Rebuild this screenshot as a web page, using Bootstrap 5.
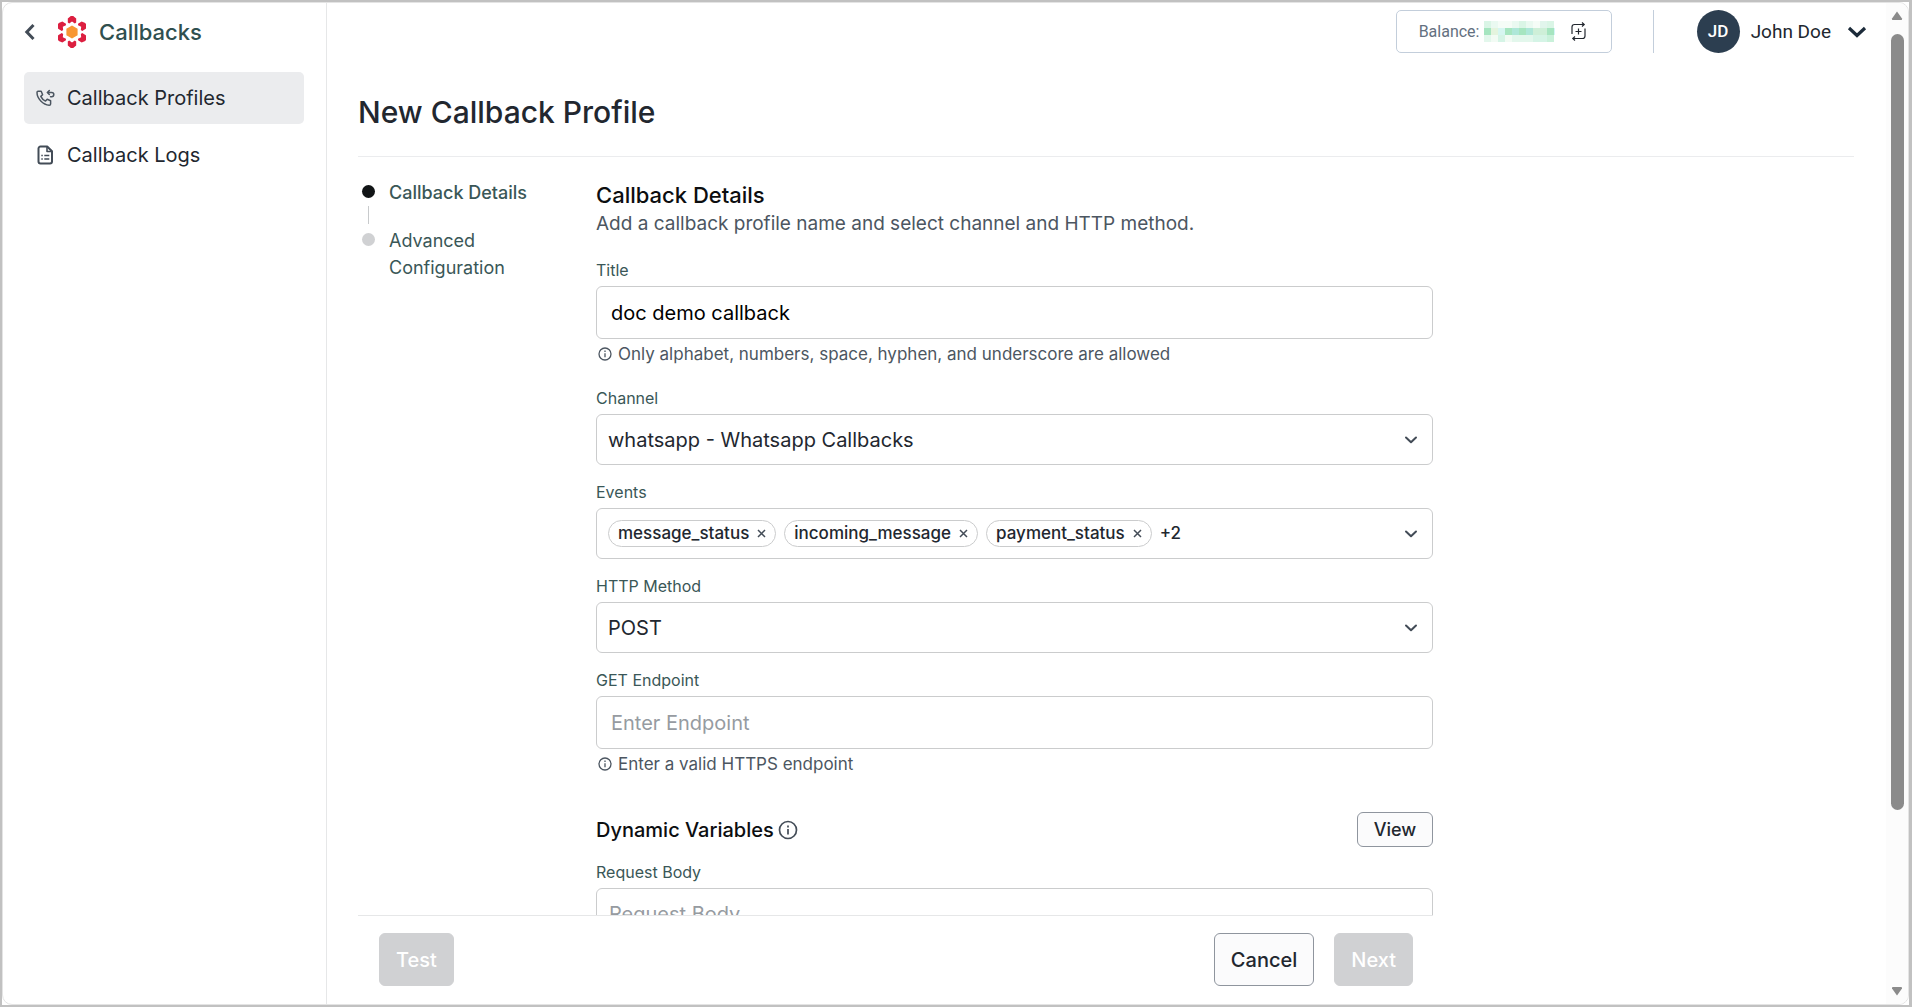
<!DOCTYPE html>
<html lang="en">
<head>
<meta charset="utf-8">
<meta name="viewport" content="width=device-width, initial-scale=1">
<title>New Callback Profile</title>
<link href="https://cdn.jsdelivr.net/npm/bootstrap@5.3.0/dist/css/bootstrap.min.css" rel="stylesheet">
<style>
  body { font-family: Inter, "Noto Sans", sans-serif; color: #22272f; background: #fff; }
  .app-frame { height: 100vh; border: 2px solid #c1c1c1; border-right-width: 3px; }
  .app-shell { height: 100%; border: 1px solid #e4e4e4; border-radius: 10px; background: #fff; }
  .side-panel { width: 324px; border-right: 1px solid #e6e7e8; padding: 0 22px 0 21px; }
  .brand-bar { height: 48px; gap: 22px; margin: 5px 0 16px; }
  .brand-mark { gap: 13px; }
  .brand-title { font-size: 22px; font-weight: 500; color: #2f4f4f; }
  .side-link { height: 52px; padding: 0 12px; gap: 12px; border-radius: 5px; font-size: 20px; color: #22272f; }
  .side-link.active { background: #ebecee; }
  .side-list { gap: 5px; }
  .top-bar { font-family: Roboto, sans-serif; height: 89px; padding: 7px 18px 0 0; }
  .balance-box { width: 216px; height: 43px; border: 1px solid #c3cedb; border-radius: 5px; padding: 0 22px; font-size: 16px; color: #637080; }
  .top-rule { width: 1px; height: 43px; background: #c3cedb; margin: 0 43px 0 41px; }
  .user-menu { gap: 11px; font-size: 19px; color: #1c2b3a; }
  .avatar { width: 43px; height: 43px; background: #2c3e50; font-size: 17px; }
  .page-area { padding: 0 32px 0 31px; }
  .page-heading { font-size: 30px; line-height: 40px; font-weight: 500; padding-bottom: 24px; border-bottom: 1px solid #ebecee; }
  .step-list { width: 238px; padding: 22px 50px 0 4px; font-size: 18px; line-height: 27px; color: #3a5757; }
  .step-item { gap: 14px; }
  .step-item:first-child { height: 48px; }
  .step-mark { width: 13px; padding-top: 6px; gap: 8px; }
  .step-dot { width: 13px; height: 13px; background: #d0d1d3; }
  .step-dot.current { background: #111416; }
  .step-line { width: 1px; height: 18px; background: #c8cacc; }
  .form-col { width: 837px; padding-top: 23px; }
  .section-title { font-size: 22px; line-height: 30px; font-weight: 500; color: #0c0e10; }
  .section-title.sub { font-size: 20px; }
  .section-note { font-size: 19px; line-height: 28px; color: #4c5661; margin-bottom: 20px; }
  .field-label { font-size: 16px; line-height: 24px; color: #3a5757; margin-bottom: 4px; display: block; }
  .field-gap { margin-bottom: 15px; }
  .form-control.field { height: 53px; font-size: 20px; padding: 0 14px; border-color: #cbcccd; border-radius: 6px; color: #000; }
  .form-control.field::placeholder { color: #969ba1; }
  .form-control.field.body-field { height: 120px; padding: 10px 12px; }
  .form-select.field { height: 51px; font-size: 20px; padding: 0 40px 0 11px; border-color: #cbcccd; border-radius: 6px; color: #22272f;
    background-image: url("data:image/svg+xml,%3Csvg xmlns='http://www.w3.org/2000/svg' viewBox='0 0 14 14'%3E%3Cpath d='M2 4.5l5 4.8 5-4.800' fill='none' stroke='%23434c57' stroke-width='2' stroke-linecap='round' stroke-linejoin='round'/%3E%3C/svg%3E");
    background-size: 14px 14px; background-position: right 14px center; }
  .multi-box { height: 51px; border: 1px solid #cbcccd; border-radius: 6px; padding: 0 14px 0 11px; gap: 8px; font-size: 17px; font-weight: 500; }
  .event-chip { height: 27px; border: 1px solid #cbcccd; border-radius: 14px; padding: 0 9px; gap: 8px; }
  .bare-btn { border: 0; background: none; padding: 0; line-height: 1; color: inherit; display: inline-flex; }
  .hint { font-size: 17px; line-height: 24px; color: #4c5661; margin-top: 3px; gap: 6px; padding-left: 2px; }
  .hint-short { margin-bottom: 20px; }
  .hint-long { margin-bottom: 36px; }
  .variables-row { height: 35px; margin-bottom: 13px; }
  .btn.plain { background: #fbfbfc; border: 1px solid #8f959e; color: #22272f; font-weight: 500; border-radius: 6px; }
  .btn.plain.small-btn { height: 35px; width: 76px; padding: 0; font-size: 18px; }
  .foot-bar { width: 1075px; height: 89px; gap: 20px; border-top: 1px solid #e6e7e8; padding: 17px 20px 0 21px; }
  .foot-btn { height: 53px; padding: 0 16px; font-size: 20px; font-weight: 500; border-radius: 6px; }
  .foot-btn:disabled { background: #d0d1d3; border-color: #d0d1d3; color: #fff; opacity: 1; }
  .scroll-track { width: 22px; background: #fcfcfc; padding: 7px 0; }
  .scroll-thumb { width: 13px; height: 776px; border-radius: 7px; background: #8b8b8b; margin: 12px 0 auto; }
</style>
</head>
<body>
<div class="app-frame">
<div class="app-shell d-flex overflow-hidden">
  <aside class="side-panel flex-shrink-0">
    <div class="brand-bar d-flex align-items-center">
      <button class="bare-btn" type="button" aria-label="Back">
        <svg width="12" height="18" viewBox="0 0 12 18"><path d="M9.500 2L2.800 9l6.700 7" fill="none" stroke="#434c57" stroke-width="3"/></svg>
      </button>
      <div class="brand-mark d-flex align-items-center">
      <svg width="28" height="32" viewBox="0 0 28 32">
        <path d="M14 9.500l5.600 3.200v6.600L14 22.500l-5.600-3.200v-6.600z" fill="#f89633"/>
        <g fill="#dc1f40">
          <path id="petal" d="M9.800 6.600V2.400L12.800 0h2.400l3 2.400v4.200l-1.400.8L14 5.400l-2.800 2z"/>
          <use href="#petal" transform="rotate(60 14 16)"/><use href="#petal" transform="rotate(120 14 16)"/>
          <use href="#petal" transform="rotate(180 14 16)"/><use href="#petal" transform="rotate(240 14 16)"/>
          <use href="#petal" transform="rotate(300 14 16)"/>
        </g>
      </svg>
      <span class="brand-title">Callbacks</span>
      </div>
    </div>
    <nav class="side-list d-flex flex-column">
      <a class="side-link active d-flex align-items-center text-decoration-none" href="#">
        <svg width="19" height="18" viewBox="0 0 19 18" fill="none" stroke="#4c5661" stroke-width="1.500" stroke-linecap="round" stroke-linejoin="round"><path d="M2 2.200h3.200l1.400 3.600-1.800 1.600c1 2.200 2.500 3.700 4.700 4.700l1.700-1.900 3.400 1.500v3.200c0 .8-.6 1.300-1.400 1.300C7 15.800 1 9.500 1 3.500c0-.8.300-1.300 1-1.300z"/><path d="M11.500 3.500h4.200a2 2 0 010 4.200h-1.200M13.300 1.500l-2 2 2 2"/></svg>
        Callback Profiles</a>
      <a class="side-link d-flex align-items-center text-decoration-none" href="#">
        <svg width="19" height="20" viewBox="0 0 19 20" fill="none" stroke="#434c57" stroke-width="2" stroke-linejoin="round"><path d="M4.500 1.500h6.700l4.800 4.800v10.200a2 2 0 01-2 2H4.500a2 2 0 01-2-2v-13a2 2 0 012-2z"/><path d="M11 1.500V6.500h5M5.300 10.500h1.500M8.300 10.500h5M5.300 14h1.500M8.300 14h5" stroke-width="1.600"/></svg>
        Callback Logs</a>
    </nav>
  </aside>

  <main class="flex-grow-1 d-flex flex-column overflow-hidden">
    <header class="top-bar d-flex justify-content-end align-items-start flex-shrink-0">
      <div class="balance-box d-flex align-items-center">
        <span>Balance:</span>
        <svg class="ms-1" width="72" height="22" viewBox="0 0 72 22" shape-rendering="crispEdges" role="img" aria-label="hidden amount">
          <g transform="translate(1)">
          <path fill="#daf5e6" d="M0 0h7v7H0zM35 0h7v7h-7zM63 0h7v7h-7z"/><path fill="#eaf9f1" d="M7 0h7v7H7zM28 0h7v7h-7zM42 0h7v7h-7z"/><path fill="#f5fcf7" d="M14 0h14v7H14zM49 0h7v7h-7z"/><path fill="#e1f5ec" d="M56 0h7v7h-7z"/>
          <path fill="#a6e5c0" d="M0 7h7v7H0zM21 7h7v7h-7zM35 7h7v7h-7zM63 7h7v7h-7z"/><path fill="#e4f4de" d="M7 7h7v7H7z"/><path fill="#d6f6f1" d="M14 7h7v7h-7z"/><path fill="#aee7d8" d="M28 7h7v7h-7zM42 7h7v7h-7z"/><path fill="#ceefd8" d="M49 7h14v7H49z"/><path fill="#d5f5fa" d="M70 7h2v7h-2z"/>
          <path fill="#e3f7ec" d="M0 14h7v7H0zM28 14h21v7H28z"/><path fill="#f2fbf4" d="M7 14h7v7H7zM21 14h7v7h-7z"/><path fill="#d5f4e6" d="M14 14h7v7h-7zM49 14h14v7H49z"/><path fill="#c9f1da" d="M63 14h7v7h-7z"/>
          </g>
        </svg>
        <button class="bare-btn ms-3" type="button" aria-label="Add balance">
          <svg width="15" height="19" viewBox="0 0 15 19" fill="none" stroke="#22272f" stroke-width="1.200"><path d="M1 12V5q0-2.500 2.500-2.500H13M11 .5l2.200 2L11 4.500M14 6.500v7.500q0 2.500-2.500 2.500H2M4 14.500l-2.200 2 2.200 2M7.500 6.500v6M4.500 9.500h6"/></svg>
        </button>
      </div>
      <div class="top-rule"></div>
      <button class="bare-btn user-menu align-items-center" type="button">
        <span class="avatar rounded-circle d-flex align-items-center justify-content-center text-white fw-medium">JD</span>
        <span>John Doe</span>
        <svg class="ms-1" width="22" height="14" viewBox="0 0 22 14"><path d="M3 3l8 7.500L19 3" fill="none" stroke="#1c2b3a" stroke-width="3.200"/></svg>
      </button>
    </header>

    <div class="page-area flex-grow-1 d-flex flex-column overflow-hidden">
      <h1 class="page-heading mb-0">New Callback Profile</h1>
      <div class="d-flex flex-grow-1 overflow-hidden">
        <div class="step-list flex-shrink-0">
          <div class="step-item d-flex">
            <div class="step-mark d-flex flex-column align-items-center flex-shrink-0"><span class="step-dot current rounded-circle"></span><span class="step-line"></span></div>
            <span class="fw-medium text-nowrap">Callback Details</span>
          </div>
          <div class="step-item d-flex">
            <div class="step-mark flex-shrink-0"><div class="step-dot rounded-circle"></div></div>
            <span>Advanced Configuration</span>
          </div>
        </div>
        <form class="form-col">
          <h2 class="section-title mb-0">Callback Details</h2>
          <p class="section-note">Add a callback profile name and select channel and HTTP method.</p>

          <label class="field-label" for="title">Title</label>
          <input class="form-control field" id="title" type="text" value="doc demo callback">
          <div class="hint hint-short d-flex align-items-center">
            <svg width="14" height="14" viewBox="0 0 14 14" fill="none" stroke="#4c5661" stroke-width="1.300"><circle cx="7" cy="7" r="6"/><path d="M7 6.300v4M7 3.500v1.400"/></svg>
            Only alphabet, numbers, space, hyphen, and underscore are allowed</div>

          <label class="field-label" for="channel">Channel</label>
          <select class="form-select field field-gap" id="channel"><option>whatsapp - Whatsapp Callbacks</option></select>

          <span class="field-label" id="events-label">Events</span>
          <div class="multi-box field-gap d-flex align-items-center" role="group" aria-labelledby="events-label">
            <span class="event-chip d-inline-flex align-items-center">message_status <button class="bare-btn" type="button" aria-label="Remove message_status"><svg width="9" height="9" viewBox="0 0 9 9" stroke="#434c57" stroke-width="1.500"><path d="M1 1l7 7M8 1L1 8"/></svg></button></span>
            <span class="event-chip d-inline-flex align-items-center">incoming_message <button class="bare-btn" type="button" aria-label="Remove incoming_message"><svg width="9" height="9" viewBox="0 0 9 9" stroke="#434c57" stroke-width="1.500"><path d="M1 1l7 7M8 1L1 8"/></svg></button></span>
            <span class="event-chip d-inline-flex align-items-center">payment_status <button class="bare-btn" type="button" aria-label="Remove payment_status"><svg width="9" height="9" viewBox="0 0 9 9" stroke="#434c57" stroke-width="1.500"><path d="M1 1l7 7M8 1L1 8"/></svg></button></span>
            <span>+2</span>
            <button class="bare-btn ms-auto" type="button" aria-label="Show events"><svg width="14" height="14" viewBox="0 0 14 14"><path d="M2 4.500l5 4.800 5-4.800" fill="none" stroke="#434c57" stroke-width="2" stroke-linecap="round" stroke-linejoin="round"/></svg></button>
          </div>

          <label class="field-label" for="method">HTTP Method</label>
          <select class="form-select field field-gap" id="method"><option>POST</option></select>

          <label class="field-label" for="endpoint">GET Endpoint</label>
          <input class="form-control field" id="endpoint" type="text" placeholder="Enter Endpoint">
          <div class="hint hint-long d-flex align-items-center">
            <svg width="14" height="14" viewBox="0 0 14 14" fill="none" stroke="#4c5661" stroke-width="1.300"><circle cx="7" cy="7" r="6"/><path d="M7 6.300v4M7 3.500v1.400"/></svg>
            Enter a valid HTTPS endpoint</div>

          <div class="variables-row d-flex align-items-center">
            <h2 class="section-title sub mb-0">Dynamic Variables</h2>
            <svg class="ms-1" width="20" height="20" viewBox="0 0 20 20" fill="none" stroke="#434c57" stroke-width="1.700"><circle cx="10" cy="10" r="8.500"/><path d="M10 9v5.500M10 5.500v2"/></svg>
            <button class="btn plain small-btn ms-auto" type="button">View</button>
          </div>

          <label class="field-label" for="body">Request Body</label>
          <textarea class="form-control field body-field" id="body" placeholder="Request Body"></textarea>
        </form>
      </div>
      <footer class="foot-bar d-flex align-items-start flex-shrink-0">
        <button class="btn foot-btn" type="button" disabled>Test</button>
        <button class="btn plain foot-btn ms-auto" type="button">Cancel</button>
        <button class="btn foot-btn" type="button" disabled>Next</button>
      </footer>
    </div>
  </main>

  <div class="scroll-track d-flex flex-column align-items-center flex-shrink-0" aria-hidden="true">
    <svg width="12" height="12" viewBox="0 0 12 12"><path d="M6 1.500L11 8.500q.6 1.500-1 1.500H2Q.4 10 1 8.500z" fill="#8b8b8b"/></svg>
    <div class="scroll-thumb"></div>
    <svg width="12" height="12" viewBox="0 0 12 12"><path d="M6 10.500L11 3.500q.6-1.500-1-1.500H2Q.4 2 1 3.500z" fill="#8b8b8b"/></svg>
  </div>
</div>
</div>
<script src="https://cdn.jsdelivr.net/npm/bootstrap@5.3.0/dist/js/bootstrap.bundle.min.js"></script>
</body>
</html>
